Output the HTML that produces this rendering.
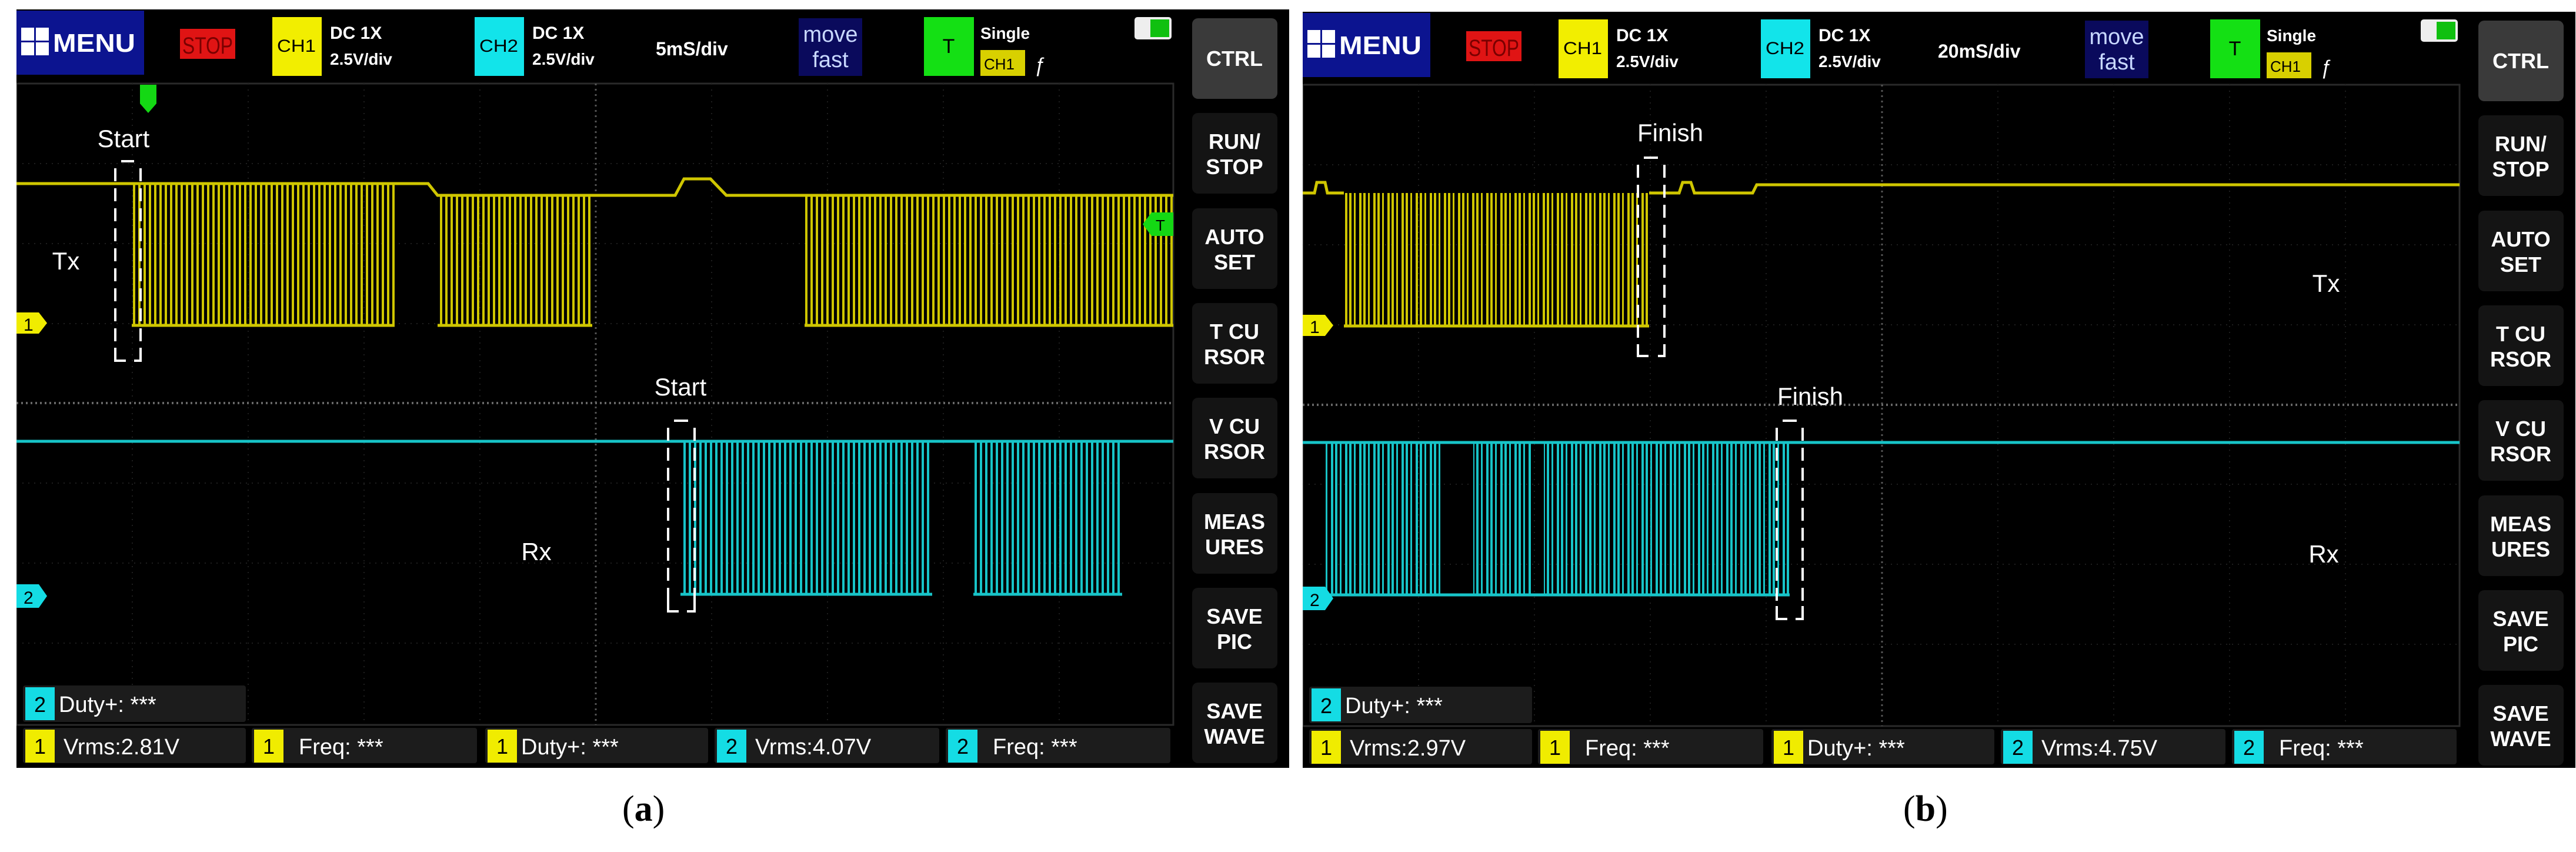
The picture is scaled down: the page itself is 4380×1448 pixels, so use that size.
<!DOCTYPE html>
<html><head><meta charset="utf-8">
<style>
html,body{margin:0;padding:0;background:#fff;width:4380px;height:1448px;overflow:hidden;position:relative}
svg{position:absolute;display:block}
text{font-family:"Liberation Sans",sans-serif}
.cap{position:absolute;font-family:"Liberation Serif",serif;font-size:62px;color:#000;top:1340px}
</style></head><body>

<svg style="left:28px;top:16px" width="2164" height="1289" viewBox="0 0 2164 1289">
<defs>
<pattern id="py" width="9" height="10" patternUnits="userSpaceOnUse"><rect x="0" width="4" height="10" fill="#cfc600"/></pattern>
<pattern id="pc" width="9" height="10" patternUnits="userSpaceOnUse"><rect x="0" width="4" height="10" fill="#17c4c8"/></pattern>
</defs>
<rect width="2164" height="1289" fill="#000"/>
<rect x="0" y="2" width="217" height="109" fill="#0c1490"/>
<rect x="8" y="31" width="22" height="22" fill="#fff"/><rect x="33" y="31" width="22" height="22" fill="#fff"/>
<rect x="8" y="56" width="22" height="22" fill="#fff"/><rect x="33" y="56" width="22" height="22" fill="#fff"/>
<text x="62" y="72" font-size="44" fill="#fff" font-weight="bold" textLength="140" lengthAdjust="spacingAndGlyphs">MENU</text>
<rect x="278" y="33" width="94" height="51" fill="#e01414"/>
<text x="282" y="75" font-size="40" fill="#7a0000" textLength="86" lengthAdjust="spacingAndGlyphs">STOP</text>
<rect x="435" y="13" width="84" height="100" fill="#f2ee00"/>
<text x="443" y="72" font-size="30" fill="#000" textLength="66" lengthAdjust="spacingAndGlyphs">CH1</text>
<text x="533" y="50" font-size="30" fill="#fff" font-family="Liberation Mono" font-weight="bold">DC  1X</text>
<text x="533" y="94" font-size="28" fill="#fff" font-family="Liberation Mono" font-weight="bold">2.5V/div</text>
<rect x="779" y="13" width="84" height="100" fill="#12e4ea"/>
<text x="787" y="72" font-size="30" fill="#000" textLength="66" lengthAdjust="spacingAndGlyphs">CH2</text>
<text x="877" y="50" font-size="30" fill="#fff" font-family="Liberation Mono" font-weight="bold">DC  1X</text>
<text x="877" y="94" font-size="28" fill="#fff" font-family="Liberation Mono" font-weight="bold">2.5V/div</text>
<text x="1087" y="78" font-size="32" fill="#fff" font-family="Liberation Mono" font-weight="bold">5mS/div</text>
<rect x="1330" y="15" width="108" height="98" fill="#0a0a5c"/>
<text x="1384" y="55" font-size="38" fill="#c8d8ff" text-anchor="middle">move</text>
<text x="1384" y="98" font-size="38" fill="#c8d8ff" text-anchor="middle">fast</text>
<rect x="1543" y="13" width="85" height="100" fill="#14e014"/>
<text x="1585" y="74" font-size="34" fill="#000" text-anchor="middle">T</text>
<text x="1639" y="50" font-size="28" fill="#fff" font-weight="bold">Single</text>
<rect x="1639" y="69" width="76" height="44" fill="#d8d000"/>
<text x="1645" y="102" font-size="26" fill="#000">CH1</text>
<text x="1730" y="106" font-size="34" fill="#fff" font-style="italic">ƒ</text>
<rect x="1901" y="13" width="63" height="38" rx="5" fill="#eee"/><rect x="1928" y="17" width="32" height="30" fill="#10c010"/>
<rect x="0" y="126" width="1967" height="1090" fill="#000" stroke="#2a2a2a" stroke-width="3"/>
<g stroke="#1e1e1e" stroke-width="2" stroke-dasharray="2 8">
<line x1="197" y1="126" x2="197" y2="1216"/><line x1="394" y1="126" x2="394" y2="1216"/><line x1="591" y1="126" x2="591" y2="1216"/><line x1="788" y1="126" x2="788" y2="1216"/>
<line x1="1182" y1="126" x2="1182" y2="1216"/><line x1="1379" y1="126" x2="1379" y2="1216"/><line x1="1576" y1="126" x2="1576" y2="1216"/><line x1="1773" y1="126" x2="1773" y2="1216"/>
<line x1="0" y1="262" x2="1967" y2="262"/><line x1="0" y1="398" x2="1967" y2="398"/><line x1="0" y1="534" x2="1967" y2="534"/>
<line x1="0" y1="805" x2="1967" y2="805"/><line x1="0" y1="941" x2="1967" y2="941"/><line x1="0" y1="1077" x2="1967" y2="1077"/>
</g>
<line x1="985" y1="126" x2="985" y2="1216" stroke="#555" stroke-width="3" stroke-dasharray="3 6"/>
<line x1="0" y1="669" x2="1967" y2="669" stroke="#666" stroke-width="4" stroke-dasharray="3 5"/>
<g stroke="#cfc600" stroke-width="5" fill="none">
<polyline points="0,296 196,296"/>
<polyline points="196,296 643,296 700,296 716,316 979,316"/>
<polyline points="196,537 643,537"/><polyline points="716,537 979,537"/>
<polyline points="979,316 1120,316 1135,288 1180,288 1207,316 1340,316 1967,316"/>
<polyline points="1340,537 1967,537"/>
</g>
<rect x="196" y="296" width="447" height="241" fill="url(#py)"/>
<rect x="716" y="316" width="263" height="221" fill="url(#py)"/>
<rect x="1340" y="316" width="627" height="221" fill="url(#py)"/>
<g stroke="#17c4c8" stroke-width="5" fill="none">
<polyline points="0,734 1967,734"/>
<polyline points="1129,994 1557,994"/><polyline points="1627,994 1880,994"/>
</g>
<rect x="1129" y="734" width="428" height="260" fill="url(#pc)"/>
<rect x="1627" y="734" width="253" height="260" fill="url(#pc)"/>
<polygon points="0,515 38,515 52,533 38,551 0,551" fill="#f0ec00"/><text x="12" y="546" font-size="30" fill="#000">1</text>
<polygon points="0,977 38,977 52,997 38,1017 0,1017" fill="#14dce4"/><text x="12" y="1010" font-size="30" fill="#000">2</text>
<polygon points="210,128 238,128 238,160 224,176 210,160" fill="#14d814"/>
<polygon points="1967,345 1930,345 1915,365 1930,385 1967,385" fill="#14d814"/><text x="1937" y="376" font-size="26" fill="#000">T</text>
<g stroke="#fff" stroke-width="4" fill="none">
<line x1="168" y1="270" x2="168" y2="597" stroke-dasharray="22 12"/><line x1="211" y1="270" x2="211" y2="597" stroke-dasharray="22 12"/>
<line x1="178" y1="258" x2="200" y2="258"/><polyline points="168,575 168,597 186,597"/><polyline points="211,575 211,597 200,597"/>
<line x1="1108" y1="711" x2="1108" y2="1023" stroke-dasharray="22 12"/><line x1="1153" y1="711" x2="1153" y2="1023" stroke-dasharray="22 12"/>
<line x1="1118" y1="699" x2="1142" y2="699"/><polyline points="1108,1000 1108,1023 1126,1023"/><polyline points="1153,1000 1153,1023 1140,1023"/>
</g>
<text x="182" y="234" font-size="42" fill="#fff" text-anchor="middle">Start</text>
<text x="84" y="442" font-size="42" fill="#fff" text-anchor="middle">Tx</text>
<text x="1129" y="656" font-size="42" fill="#fff" text-anchor="middle">Start</text>
<text x="884" y="936" font-size="42" fill="#fff" text-anchor="middle">Rx</text>
<g fill="#1c1c1c"><rect x="11" y="1149" width="379" height="62" rx="4"/>
<rect x="11" y="1221" width="379" height="60" rx="4"/><rect x="400" y="1221" width="383" height="60" rx="4"/><rect x="797" y="1221" width="379" height="60" rx="4"/><rect x="1187" y="1221" width="382" height="60" rx="4"/><rect x="1580" y="1221" width="382" height="60" rx="4"/></g>
<rect x="15" y="1152" width="50" height="56" fill="#14dce4"/><text x="30" y="1194" font-size="36" fill="#000">2</text><text x="72" y="1194" font-size="38" fill="#fff" font-family="Liberation Mono">Duty+: ***</text>
<rect x="15" y="1224" width="50" height="56" fill="#f0ec00"/><text x="30" y="1265" font-size="36" fill="#000">1</text><text x="80" y="1266" font-size="38" fill="#fff" font-family="Liberation Mono">Vrms:2.81V</text>
<rect x="404" y="1224" width="50" height="56" fill="#f0ec00"/><text x="419" y="1265" font-size="36" fill="#000">1</text><text x="480" y="1266" font-size="38" fill="#fff" font-family="Liberation Mono">Freq: ***</text>
<rect x="801" y="1224" width="50" height="56" fill="#f0ec00"/><text x="816" y="1265" font-size="36" fill="#000">1</text><text x="858" y="1266" font-size="38" fill="#fff" font-family="Liberation Mono">Duty+: ***</text>
<rect x="1191" y="1224" width="50" height="56" fill="#14dce4"/><text x="1206" y="1265" font-size="36" fill="#000">2</text><text x="1256" y="1266" font-size="38" fill="#fff" font-family="Liberation Mono">Vrms:4.07V</text>
<rect x="1584" y="1224" width="50" height="56" fill="#14dce4"/><text x="1599" y="1265" font-size="36" fill="#000">2</text><text x="1660" y="1266" font-size="38" fill="#fff" font-family="Liberation Mono">Freq: ***</text>
<g fill="#141414"><rect x="1999" y="15" width="145" height="137" rx="10" fill="#3a3a3a"/><rect x="1999" y="176" width="145" height="137" rx="10"/><rect x="1999" y="338" width="145" height="137" rx="10"/><rect x="1999" y="499" width="145" height="137" rx="10"/><rect x="1999" y="660" width="145" height="137" rx="10"/><rect x="1999" y="822" width="145" height="137" rx="10"/><rect x="1999" y="983" width="145" height="137" rx="10"/><rect x="1999" y="1144" width="145" height="137" rx="10"/></g>
<g fill="#fff" font-size="36" font-weight="bold" text-anchor="middle">
<text x="2071" y="96">CTRL</text>
<text x="2071" y="237">RUN/</text><text x="2071" y="280">STOP</text>
<text x="2071" y="399">AUTO</text><text x="2071" y="442">SET</text>
<text x="2071" y="560">T  CU</text><text x="2071" y="603">RSOR</text>
<text x="2071" y="721">V  CU</text><text x="2071" y="764">RSOR</text>
<text x="2071" y="883">MEAS</text><text x="2071" y="926">URES</text>
<text x="2071" y="1044">SAVE</text><text x="2071" y="1087">PIC</text>
<text x="2071" y="1205">SAVE</text><text x="2071" y="1248">WAVE</text>
</g>
</svg>

<svg style="left:2215px;top:20px" width="2164" height="1285" viewBox="0 0 2164 1285">
<defs>
<pattern id="py2" width="24" height="10" patternUnits="userSpaceOnUse"><rect x="0" width="4" height="10" fill="#cfc600"/><rect x="7" width="4" height="10" fill="#cfc600"/><rect x="15" width="3" height="10" fill="#cfc600"/></pattern>
<pattern id="pc2" width="24" height="10" patternUnits="userSpaceOnUse"><rect x="0" width="4" height="10" fill="#17c4c8"/><rect x="7" width="4" height="10" fill="#17c4c8"/><rect x="15" width="3" height="10" fill="#17c4c8"/></pattern>
</defs>
<rect width="2164" height="1285" fill="#000"/>
<rect x="0" y="2" width="217" height="109" fill="#0c1490"/>
<rect x="8" y="31" width="22" height="22" fill="#fff"/><rect x="33" y="31" width="22" height="22" fill="#fff"/>
<rect x="8" y="56" width="22" height="22" fill="#fff"/><rect x="33" y="56" width="22" height="22" fill="#fff"/>
<text x="62" y="72" font-size="44" fill="#fff" font-weight="bold" textLength="140" lengthAdjust="spacingAndGlyphs">MENU</text>
<rect x="278" y="33" width="94" height="51" fill="#e01414"/>
<text x="282" y="75" font-size="40" fill="#7a0000" textLength="86" lengthAdjust="spacingAndGlyphs">STOP</text>
<rect x="435" y="13" width="84" height="100" fill="#f2ee00"/>
<text x="443" y="72" font-size="30" fill="#000" textLength="66" lengthAdjust="spacingAndGlyphs">CH1</text>
<text x="533" y="50" font-size="30" fill="#fff" font-family="Liberation Mono" font-weight="bold">DC  1X</text>
<text x="533" y="94" font-size="28" fill="#fff" font-family="Liberation Mono" font-weight="bold">2.5V/div</text>
<rect x="779" y="13" width="84" height="100" fill="#12e4ea"/>
<text x="787" y="72" font-size="30" fill="#000" textLength="66" lengthAdjust="spacingAndGlyphs">CH2</text>
<text x="877" y="50" font-size="30" fill="#fff" font-family="Liberation Mono" font-weight="bold">DC  1X</text>
<text x="877" y="94" font-size="28" fill="#fff" font-family="Liberation Mono" font-weight="bold">2.5V/div</text>
<text x="1080" y="78" font-size="32" fill="#fff" font-family="Liberation Mono" font-weight="bold">20mS/div</text>
<rect x="1330" y="15" width="108" height="98" fill="#0a0a5c"/>
<text x="1384" y="55" font-size="38" fill="#c8d8ff" text-anchor="middle">move</text>
<text x="1384" y="98" font-size="38" fill="#c8d8ff" text-anchor="middle">fast</text>
<rect x="1543" y="13" width="85" height="100" fill="#14e014"/>
<text x="1585" y="74" font-size="34" fill="#000" text-anchor="middle">T</text>
<text x="1639" y="50" font-size="28" fill="#fff" font-weight="bold">Single</text>
<rect x="1639" y="69" width="76" height="44" fill="#d8d000"/>
<text x="1645" y="102" font-size="26" fill="#000">CH1</text>
<text x="1730" y="106" font-size="34" fill="#fff" font-style="italic">ƒ</text>
<rect x="1901" y="13" width="63" height="38" rx="5" fill="#eee"/><rect x="1928" y="17" width="32" height="30" fill="#10c010"/>
<rect x="0" y="124" width="1967" height="1090" fill="#000" stroke="#2a2a2a" stroke-width="3"/>
<g stroke="#1e1e1e" stroke-width="2" stroke-dasharray="2 8">
<line x1="197" y1="124" x2="197" y2="1214"/><line x1="394" y1="124" x2="394" y2="1214"/><line x1="591" y1="124" x2="591" y2="1214"/><line x1="788" y1="124" x2="788" y2="1214"/>
<line x1="1182" y1="124" x2="1182" y2="1214"/><line x1="1379" y1="124" x2="1379" y2="1214"/><line x1="1576" y1="124" x2="1576" y2="1214"/><line x1="1773" y1="124" x2="1773" y2="1214"/>
<line x1="0" y1="260" x2="1967" y2="260"/><line x1="0" y1="396" x2="1967" y2="396"/><line x1="0" y1="532" x2="1967" y2="532"/>
<line x1="0" y1="803" x2="1967" y2="803"/><line x1="0" y1="939" x2="1967" y2="939"/><line x1="0" y1="1075" x2="1967" y2="1075"/>
</g>
<line x1="985" y1="124" x2="985" y2="1214" stroke="#555" stroke-width="3" stroke-dasharray="3 6"/>
<line x1="0" y1="668" x2="1967" y2="668" stroke="#666" stroke-width="4" stroke-dasharray="3 5"/>
<g stroke="#cfc600" stroke-width="5" fill="none">
<polyline points="0,308 20,308 24,290 38,290 42,308 70,308"/>
<polyline points="70,534 589,534"/>
<polyline points="589,308 640,308 646,290 660,290 666,308 765,308 772,294 1967,294"/>
</g>
<rect x="70" y="308" width="519" height="226" fill="url(#py2)"/>
<g stroke="#17c4c8" stroke-width="5" fill="none">
<polyline points="0,732 1967,732"/>
<polyline points="35,991 828,991"/>
</g>
<rect x="35" y="732" width="200" height="259" fill="url(#pc2)"/>
<rect x="290" y="732" width="100" height="259" fill="url(#pc2)"/>
<rect x="410" y="732" width="418" height="259" fill="url(#pc2)"/>
<polygon points="0,515 38,515 52,533 38,551 0,551" fill="#f0ec00"/><text x="12" y="546" font-size="30" fill="#000">1</text>
<polygon points="0,977 38,977 52,997 38,1017 0,1017" fill="#14dce4"/><text x="12" y="1010" font-size="30" fill="#000">2</text>
<g stroke="#fff" stroke-width="4" fill="none">
<line x1="570" y1="260" x2="570" y2="585" stroke-dasharray="22 12"/><line x1="615" y1="260" x2="615" y2="585" stroke-dasharray="22 12"/>
<line x1="580" y1="248" x2="604" y2="248"/><polyline points="570,565 570,585 588,585"/><polyline points="615,565 615,585 604,585"/>
<line x1="806" y1="707" x2="806" y2="1032" stroke-dasharray="22 12"/><line x1="850" y1="707" x2="850" y2="1032" stroke-dasharray="22 12"/>
<line x1="816" y1="695" x2="840" y2="695"/><polyline points="806,1010 806,1032 824,1032"/><polyline points="850,1010 850,1032 838,1032"/>
</g>
<text x="625" y="220" font-size="42" fill="#fff" text-anchor="middle">Finish</text>
<text x="863" y="668" font-size="42" fill="#fff" text-anchor="middle">Finish</text>
<text x="1740" y="476" font-size="42" fill="#fff" text-anchor="middle">Tx</text>
<text x="1736" y="936" font-size="42" fill="#fff" text-anchor="middle">Rx</text>
<g fill="#1c1c1c"><rect x="11" y="1147" width="379" height="62" rx="4"/>
<rect x="11" y="1219" width="379" height="60" rx="4"/><rect x="400" y="1219" width="383" height="60" rx="4"/><rect x="797" y="1219" width="379" height="60" rx="4"/><rect x="1187" y="1219" width="382" height="60" rx="4"/><rect x="1580" y="1219" width="382" height="60" rx="4"/></g>
<rect x="15" y="1150" width="50" height="56" fill="#14dce4"/><text x="30" y="1192" font-size="36" fill="#000">2</text><text x="72" y="1192" font-size="38" fill="#fff" font-family="Liberation Mono">Duty+: ***</text>
<rect x="15" y="1222" width="50" height="56" fill="#f0ec00"/><text x="30" y="1263" font-size="36" fill="#000">1</text><text x="80" y="1264" font-size="38" fill="#fff" font-family="Liberation Mono">Vrms:2.97V</text>
<rect x="404" y="1222" width="50" height="56" fill="#f0ec00"/><text x="419" y="1263" font-size="36" fill="#000">1</text><text x="480" y="1264" font-size="38" fill="#fff" font-family="Liberation Mono">Freq: ***</text>
<rect x="801" y="1222" width="50" height="56" fill="#f0ec00"/><text x="816" y="1263" font-size="36" fill="#000">1</text><text x="858" y="1264" font-size="38" fill="#fff" font-family="Liberation Mono">Duty+: ***</text>
<rect x="1191" y="1222" width="50" height="56" fill="#14dce4"/><text x="1206" y="1263" font-size="36" fill="#000">2</text><text x="1256" y="1264" font-size="38" fill="#fff" font-family="Liberation Mono">Vrms:4.75V</text>
<rect x="1584" y="1222" width="50" height="56" fill="#14dce4"/><text x="1599" y="1263" font-size="36" fill="#000">2</text><text x="1660" y="1264" font-size="38" fill="#fff" font-family="Liberation Mono">Freq: ***</text>
<g fill="#141414"><rect x="1999" y="15" width="145" height="137" rx="10" fill="#3a3a3a"/><rect x="1999" y="176" width="145" height="137" rx="10"/><rect x="1999" y="338" width="145" height="137" rx="10"/><rect x="1999" y="499" width="145" height="137" rx="10"/><rect x="1999" y="660" width="145" height="137" rx="10"/><rect x="1999" y="822" width="145" height="137" rx="10"/><rect x="1999" y="983" width="145" height="137" rx="10"/><rect x="1999" y="1144" width="145" height="137" rx="10"/></g>
<g fill="#fff" font-size="36" font-weight="bold" text-anchor="middle">
<text x="2071" y="96">CTRL</text>
<text x="2071" y="237">RUN/</text><text x="2071" y="280">STOP</text>
<text x="2071" y="399">AUTO</text><text x="2071" y="442">SET</text>
<text x="2071" y="560">T  CU</text><text x="2071" y="603">RSOR</text>
<text x="2071" y="721">V  CU</text><text x="2071" y="764">RSOR</text>
<text x="2071" y="883">MEAS</text><text x="2071" y="926">URES</text>
<text x="2071" y="1044">SAVE</text><text x="2071" y="1087">PIC</text>
<text x="2071" y="1205">SAVE</text><text x="2071" y="1248">WAVE</text>
</g>
</svg>

<div class="cap" style="left:1058px">(<b>a</b>)</div>
<div class="cap" style="left:3236px">(<b>b</b>)</div>
</body></html>
